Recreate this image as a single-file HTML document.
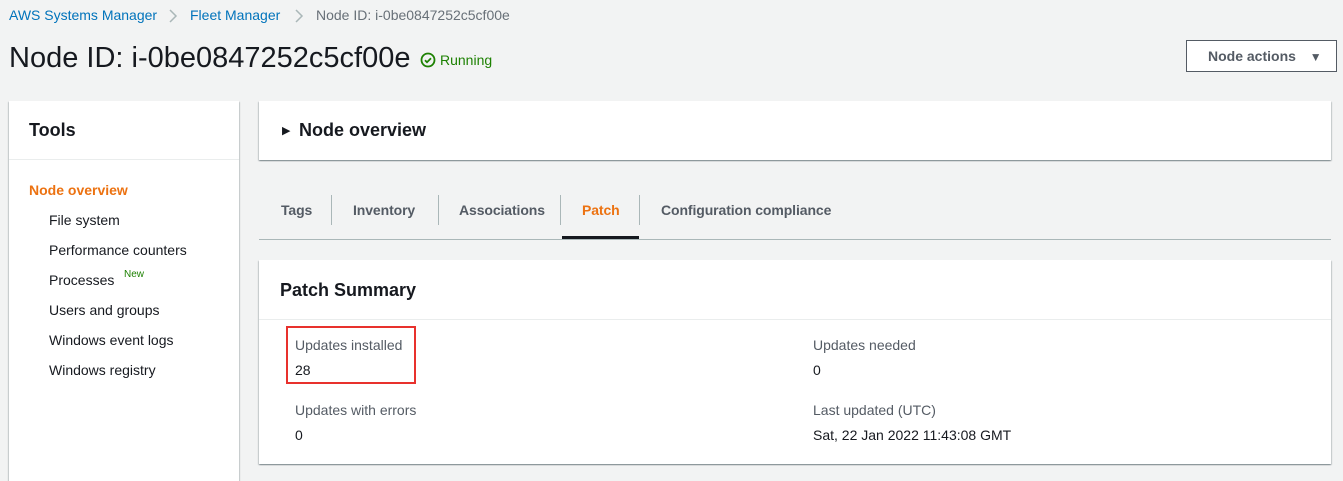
<!DOCTYPE html><html><head><style>
body{margin:0;width:1343px;height:474px;background:#f2f3f3;font-family:"Liberation Sans",sans-serif;position:relative;overflow:hidden;color:#16191f}
.a{position:absolute;white-space:nowrap}
.p{position:absolute;background:#fff;box-shadow:0 1px 1px 0 rgba(0,28,36,.3),1px 1px 1px 0 rgba(0,28,36,.15),-1px 1px 1px 0 rgba(0,28,36,.15)}
.bc{font-size:14px;color:#0073bb;top:7px}
.tab{font-size:14px;font-weight:bold;color:#545b64;top:202px;letter-spacing:-0.1px}
.sep{position:absolute;top:195px;width:1px;height:30px;background:#aab7b8}
.nav{font-size:14px;color:#16191f;left:49px}
.lab{font-size:14px;color:#545b64}
.val{font-size:14px;color:#16191f}
</style></head><body>
<div class="a bc" style="left:9px">AWS Systems Manager</div>
<svg class="a" style="left:168px;top:9px" width="10" height="14" viewBox="0 0 10 14"><path d="M2 1l6 6-6 6" fill="none" stroke="#aab7b8" stroke-width="1.5"/></svg>
<div class="a bc" style="left:190px">Fleet Manager</div>
<svg class="a" style="left:294px;top:9px" width="10" height="14" viewBox="0 0 10 14"><path d="M2 1l6 6-6 6" fill="none" stroke="#aab7b8" stroke-width="1.5"/></svg>
<div class="a bc" style="left:316px;color:#687078">Node ID: i-0be0847252c5cf00e</div>
<div class="a" style="left:9px;top:42px;font-size:29px">Node ID: i-0be0847252c5cf00e</div>
<svg class="a" style="left:420px;top:52px" width="16" height="16" viewBox="0 0 16 16"><circle cx="8" cy="8" r="6.5" fill="none" stroke="#1d8102" stroke-width="1.8"/><path d="M5 8.2l2 2 4-4" fill="none" stroke="#1d8102" stroke-width="1.8"/></svg>
<div class="a" style="left:440px;top:52px;font-size:14px;color:#1d8102">Running</div>
<div class="a" style="left:1186px;top:40px;width:151px;height:32px;border:1px solid #545b64;background:#fff;box-sizing:border-box;font-size:14px;font-weight:bold;color:#545b64;line-height:30px;padding-left:21px">Node actions <span style="font-size:12px;margin-left:10px">&#9660;</span></div>
<div class="p" style="left:9px;top:101px;width:230px;height:380px"></div>
<div class="a" style="left:9px;top:159px;width:230px;height:1px;background:#eaeded"></div>
<div class="a" style="left:29px;top:120px;font-size:18px;font-weight:bold">Tools</div>
<div class="a" style="left:29px;top:182px;font-size:14px;font-weight:bold;color:#ec7211">Node overview</div>
<div class="a nav" style="top:212px">File system</div>
<div class="a nav" style="top:242px">Performance counters</div>
<div class="a nav" style="top:272px">Processes</div>
<div class="a" style="left:124px;top:269px;font-size:10px;color:#1d8102">New</div>
<div class="a nav" style="top:302px">Users and groups</div>
<div class="a nav" style="top:332px">Windows event logs</div>
<div class="a nav" style="top:362px">Windows registry</div>
<div class="p" style="left:259px;top:101px;width:1072px;height:59px"></div>
<div class="a" style="left:282px;top:124px;font-size:11px">&#9654;</div>
<div class="a" style="left:299px;top:120px;font-size:18px;font-weight:bold">Node overview</div>
<div class="a tab" style="left:281px">Tags</div><div class="sep" style="left:331px"></div>
<div class="a tab" style="left:353px">Inventory</div><div class="sep" style="left:438px"></div>
<div class="a tab" style="left:459px">Associations</div><div class="sep" style="left:560px"></div>
<div class="a tab" style="left:582px;color:#ec7211">Patch</div><div class="sep" style="left:639px"></div>
<div class="a tab" style="left:661px">Configuration compliance</div>
<div class="a" style="left:259px;top:239px;width:1072px;height:1px;background:#aab7b8"></div>
<div class="a" style="left:562px;top:236px;width:77px;height:3px;background:#16191f"></div>
<div class="p" style="left:259px;top:260px;width:1072px;height:204px"></div>
<div class="a" style="left:259px;top:319px;width:1072px;height:1px;background:#eaeded"></div>
<div class="a" style="left:280px;top:280px;font-size:18px;font-weight:bold">Patch Summary</div>
<div class="a" style="left:286px;top:326px;width:130px;height:58px;border:2px solid #e8312d;box-sizing:border-box"></div>
<div class="a lab" style="left:295px;top:337px">Updates installed</div>
<div class="a val" style="left:295px;top:362px">28</div>
<div class="a lab" style="left:813px;top:337px">Updates needed</div>
<div class="a val" style="left:813px;top:362px">0</div>
<div class="a lab" style="left:295px;top:402px">Updates with errors</div>
<div class="a val" style="left:295px;top:427px">0</div>
<div class="a lab" style="left:813px;top:402px">Last updated (UTC)</div>
<div class="a val" style="left:813px;top:427px">Sat, 22 Jan 2022 11:43:08 GMT</div>
</body></html>
